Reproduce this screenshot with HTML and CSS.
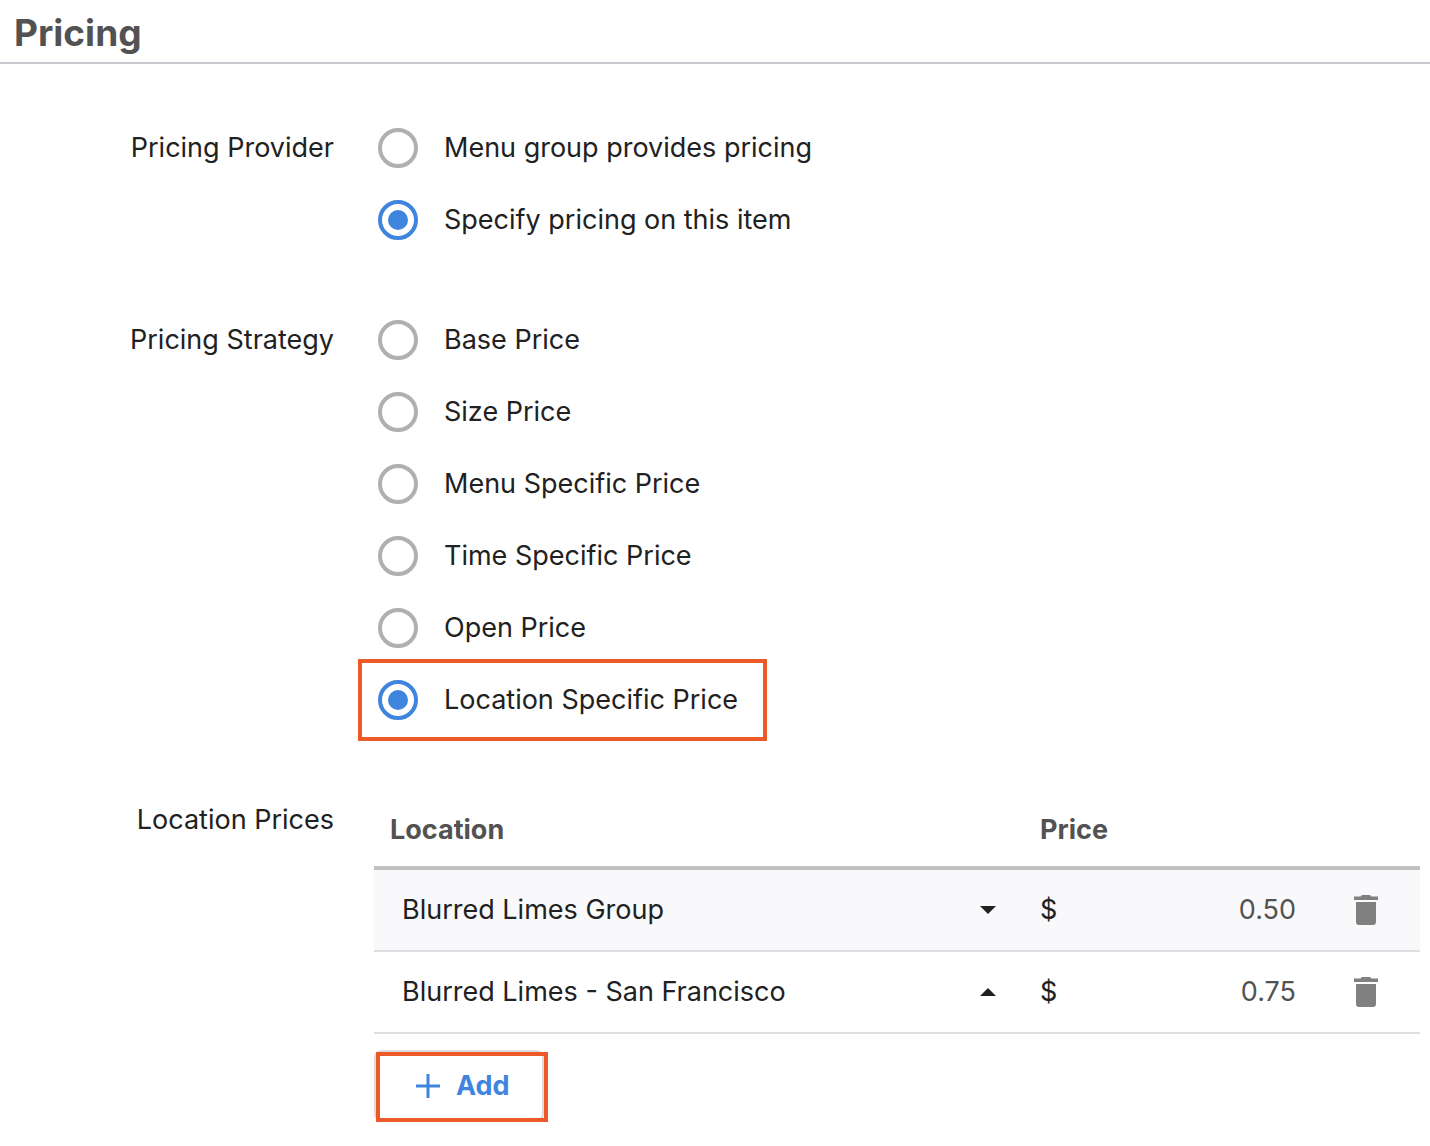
FILE: index.html
```html
<!DOCTYPE html>
<html lang="en">
<head>
    <meta charset="UTF-8">
    <meta name="viewport" content="width=device-width, initial-scale=1.0">
    <title>Pricing</title>
    <link rel="stylesheet" href="styles.css">
</head>
<body>
    <h1 class="section-title">Pricing</h1>

    <form class="pricing-form">
        <div class="form-row" role="radiogroup" aria-labelledby="provider-label">
            <div class="row-label" id="provider-label">Pricing Provider</div>
            <div class="options">
                <label class="option"><input type="radio" name="provider">Menu group provides pricing</label>
                <label class="option"><input type="radio" name="provider" checked>Specify pricing on this item</label>
            </div>
        </div>

        <div class="form-row" role="radiogroup" aria-labelledby="strategy-label">
            <div class="row-label" id="strategy-label">Pricing Strategy</div>
            <div class="options">
                <label class="option"><input type="radio" name="strategy">Base Price</label>
                <label class="option"><input type="radio" name="strategy">Size Price</label>
                <label class="option"><input type="radio" name="strategy">Menu Specific Price</label>
                <label class="option"><input type="radio" name="strategy">Time Specific Price</label>
                <label class="option"><input type="radio" name="strategy">Open Price</label>
                <label class="option highlighted"><input type="radio" name="strategy" checked>Location Specific Price</label>
            </div>
        </div>

        <div class="form-row">
            <div class="row-label" id="prices-label">Location Prices</div>
            <div class="prices">
                <table class="price-table" aria-labelledby="prices-label">
                    <thead>
                        <tr>
                            <th class="col-location">Location</th>
                            <th class="col-price">Price</th>
                            <th class="col-delete"></th>
                        </tr>
                    </thead>
                    <tbody>
                        <tr>
                            <td>
                                <div class="select-box">
                                    <select aria-label="Location">
                                        <option>Blurred Limes Group</option>
                                    </select>
                                    <svg class="caret" viewBox="0 0 16 8" aria-hidden="true"><path d="M0 0h16L8 8z"/></svg>
                                </div>
                            </td>
                            <td>
                                <label class="price">$<input type="text" value="0.50" aria-label="Price"></label>
                            </td>
                            <td>
                                <button type="button" class="delete" aria-label="Delete">
                                    <svg viewBox="0 0 24 30" aria-hidden="true"><path d="M0 1.500h6.500l1.500-1.500h8l1.500 1.500H24v3.500H0zM2 7h20v20q0 3-3 3H5q-3 0-3-3z"/></svg>
                                </button>
                            </td>
                        </tr>
                        <tr>
                            <td>
                                <div class="select-box">
                                    <select aria-label="Location">
                                        <option>Blurred Limes - San Francisco</option>
                                    </select>
                                    <svg class="caret" viewBox="0 0 16 8" aria-hidden="true"><path d="M0 8h16L8 0z"/></svg>
                                </div>
                            </td>
                            <td>
                                <label class="price">$<input type="text" value="0.75" aria-label="Price"></label>
                            </td>
                            <td>
                                <button type="button" class="delete" aria-label="Delete">
                                    <svg viewBox="0 0 24 30" aria-hidden="true"><path d="M0 1.500h6.500l1.500-1.500h8l1.500 1.500H24v3.500H0zM2 7h20v20q0 3-3 3H5q-3 0-3-3z"/></svg>
                                </button>
                            </td>
                        </tr>
                    </tbody>
                </table>

                <button type="button" class="add">
                    <svg viewBox="0 0 24 24" aria-hidden="true"><path d="M12 0v24M0 12h24"/></svg>
                    Add
                </button>
            </div>
        </div>
    </form>
</body>
</html>
```
FILE: styles.css
```css
* {
    box-sizing: border-box;
}
body {
    margin: 0;
    background-color: #fff;
    color: #212121;
    font-family: Inter, "Liberation Sans", sans-serif;
    font-size: 27px;
    line-height: 40px;
}
.section-title {
    margin: 0;
    padding: 5px 14px 1px;
    border-bottom: 2px solid #c9c9d0;
    color: #525252;
    font-size: 37px;
    font-weight: 700;
    line-height: 56px;
}
.pricing-form {
    display: flex;
    flex-direction: column;
    gap: 48px;
    padding: 48px 10px 24px 0;
}
.form-row {
    display: grid;
    grid-template-columns: 334px 1fr;
    column-gap: 40px;
}
.row-label {
    padding: 16px 0;
    text-align: right;
}
.options {
    display: flex;
    flex-direction: column;
    align-items: flex-start;
    padding-left: 4px;
}
.option {
    display: flex;
    align-items: center;
    gap: 26px;
    height: 72px;
    cursor: pointer;
}
.option input {
    appearance: none;
    width: 40px;
    height: 40px;
    margin: 0;
    border: 4px solid #b0b0b0;
    border-radius: 50%;
    background-color: #fff;
    cursor: pointer;
}
.option input:checked {
    padding: 6px;
    border-color: #3f85de;
    background-color: #3f85de;
    background-clip: content-box;
}

/* Orange callout boxes */
.highlighted,
.add {
    position: relative;
}
.highlighted::after,
.add::after {
    content: "";
    position: absolute;
    border: 4px solid #ed5a29;
    pointer-events: none;
}
.highlighted::after {
    inset: -5px -29px -5px -20px;
}
.add::after {
    inset: 0 -6px -2px 0;
}

.prices {
    padding-top: 10px;
}
.price-table {
    width: 100%;
    border-spacing: 0;
    table-layout: fixed;
}
.price-table th {
    height: 76px;
    padding: 0 16px;
    border-bottom: 4px solid #c0c0c0;
    color: #525252;
    font-weight: 700;
    text-align: left;
}
.price-table td {
    height: 82px;
    padding: 0 16px;
    border-bottom: 2px solid #dedfe0;
}
.price-table tbody tr:nth-child(odd) {
    background-color: #f9f9fb;
}
.col-price {
    width: 288px;
}
.col-delete {
    width: 108px;
}
.select-box {
    display: grid;
    align-items: center;
}
.select-box select,
.caret {
    grid-area: 1 / 1;
}
.select-box select {
    appearance: none;
    width: 100%;
    padding: 0 40px 0 12px;
    border: none;
    background: none;
    color: inherit;
    font: inherit;
}
.caret {
    justify-self: end;
    width: 16px;
    height: 8px;
    margin-right: 12px;
    fill: #212121;
    pointer-events: none;
}
.price {
    display: flex;
    justify-content: space-between;
}
.price input {
    width: 120px;
    padding: 0;
    border: none;
    background: none;
    color: #525252;
    font: inherit;
    text-align: right;
}
.delete {
    display: block;
    margin: 0 auto;
    padding: 0;
    border: none;
    background: none;
    cursor: pointer;
}
.delete svg {
    display: block;
    width: 24px;
    height: 30px;
    fill: #808080;
}
.add {
    display: flex;
    align-items: center;
    gap: 16px;
    height: 72px;
    margin-top: 16px;
    padding: 0 32px 0 40px;
    border: 2px solid #dadce0;
    border-radius: 8px;
    background-color: #fff;
    color: #3f85de;
    font: inherit;
    font-weight: 700;
    cursor: pointer;
}
.add svg {
    width: 24px;
    height: 24px;
    fill: none;
    stroke: currentColor;
    stroke-width: 3;
}
```
